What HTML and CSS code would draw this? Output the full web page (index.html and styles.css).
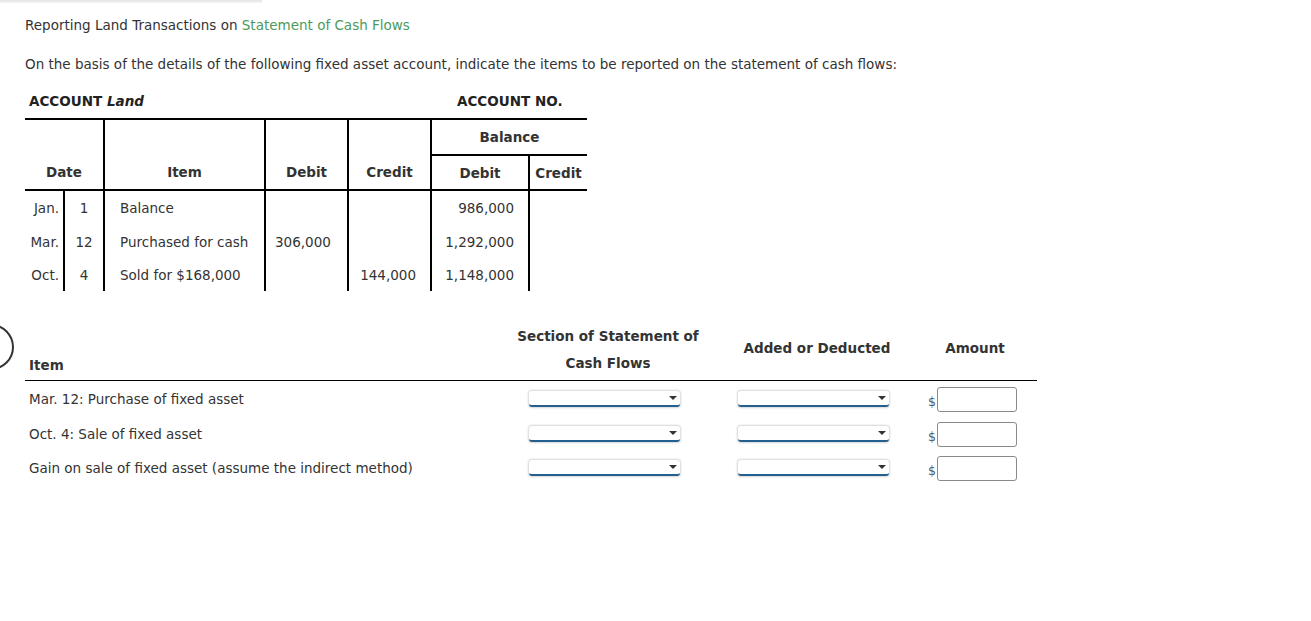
FILE: index.html
```html
<!DOCTYPE html>
<html>
<head>
<meta charset="utf-8">
<link rel="stylesheet" href="styles.css">
</head>
<body>
<div class="topbar"></div>
<div class="ring"></div>
<div class="page">
  <p class="title">Reporting Land Transactions on <span class="green">Statement of Cash Flows</span></p>
  <p class="intro">On the basis of the details of the following fixed asset account, indicate the items to be reported on the statement of cash flows:</p>
  <div class="acct">
    <span class="acct-name">ACCOUNT <i>Land</i></span>
    <span class="acct-no">ACCOUNT NO.</span>
  </div>
  <table class="ledger">
    <colgroup>
      <col style="width:39px"><col style="width:40px"><col style="width:161px"><col style="width:83px"><col style="width:83px"><col style="width:98px"><col style="width:58px">
    </colgroup>
    <tr class="h1">
      <th colspan="2" rowspan="2" class="date-h">Date</th>
      <th rowspan="2" class="vl">Item</th>
      <th rowspan="2" class="vl">Debit</th>
      <th rowspan="2" class="vl">Credit</th>
      <th colspan="2" class="vl bal">Balance</th>
    </tr>
    <tr class="h2">
      <th class="vl bt">Debit</th>
      <th class="vl bt">Credit</th>
    </tr>
    <tr class="r first">
      <td class="mon">Jan.</td><td class="day vl">1</td><td class="vl item">Balance</td><td class="vl num"></td><td class="vl num"></td><td class="vl num">986,000</td><td class="vl"></td>
    </tr>
    <tr class="r">
      <td class="mon">Mar.</td><td class="day vl">12</td><td class="vl item">Purchased for cash</td><td class="vl numl">306,000</td><td class="vl num"></td><td class="vl num">1,292,000</td><td class="vl"></td>
    </tr>
    <tr class="r">
      <td class="mon">Oct.</td><td class="day vl">4</td><td class="vl item">Sold for $168,000</td><td class="vl num"></td><td class="vl num">144,000</td><td class="vl num">1,148,000</td><td class="vl"></td>
    </tr>
  </table>

  <table class="answers">
    <colgroup>
      <col style="width:492px"><col style="width:182px"><col style="width:226px"><col style="width:112px">
    </colgroup>
    <tr class="ah">
      <th class="a-item">Item</th>
      <th class="a-sec">Section of Statement of<br>Cash Flows</th>
      <th class="a-mid add-h">Added or Deducted</th>
      <th class="a-mid amt-h">Amount</th>
    </tr>
    <tr class="ar">
      <td>Mar. 12: Purchase of fixed asset</td>
      <td class="c1"><span class="sel"></span></td>
      <td class="c2"><span class="sel"></span></td>
      <td class="c3"><div class="amt"><span class="dollar">$</span><span class="inp"></span></div></td>
    </tr>
    <tr class="ar">
      <td>Oct. 4: Sale of fixed asset</td>
      <td class="c1"><span class="sel"></span></td>
      <td class="c2"><span class="sel"></span></td>
      <td class="c3"><div class="amt"><span class="dollar">$</span><span class="inp"></span></div></td>
    </tr>
    <tr class="ar">
      <td>Gain on sale of fixed asset (assume the indirect method)</td>
      <td class="c1"><span class="sel"></span></td>
      <td class="c2"><span class="sel"></span></td>
      <td class="c3"><div class="amt"><span class="dollar">$</span><span class="inp"></span></div></td>
    </tr>
  </table>
</div>
</body>
</html>
```

FILE: styles.css
```css
html, body {
  margin: 0;
  padding: 0;
  background: #fff;
}
body {
  font-family: "DejaVu Sans", Verdana, sans-serif;
  font-size: 13.5px;
  color: #333;
  position: relative;
  min-height: 621px;
}
.topbar {
  position: absolute;
  left: 0;
  top: 0;
  width: 262px;
  height: 3px;
  background: linear-gradient(#e4e4e4, #f6f6f6);
}
.ring {
  position: absolute;
  left: -32px;
  top: 324px;
  width: 42px;
  height: 42px;
  border: 2.5px solid #333;
  border-radius: 50%;
}
.page {
  padding: 17px 25px 0 25px;
}
.title {
  margin: 0;
  line-height: 17px;
}
.green {
  color: #4c9a5a;
}
.intro {
  margin: 22px 0 0 0;
  line-height: 17px;
}
.acct {
  display: flex;
  width: 562px;
  margin-top: 20px;
  font-weight: bold;
  line-height: 17px;
  color: #222;
}
.acct-name {
  padding-left: 4px;
  width: 428px;
}
.acct i {
  font-style: italic;
}
.ledger {
  border-collapse: collapse;
  table-layout: fixed;
  width: 562px;
  margin-top: 8px;
  border-top: 2px solid #000;
}
.ledger th {
  font-weight: bold;
  color: #333;
  padding: 0;
}
.ledger .h1 th { height: 34px; }
.ledger .h1 .bal { vertical-align: middle; }
.ledger .h1 th[rowspan] { vertical-align: bottom; padding-bottom: 9px; }
.ledger .h2 th { height: 33px; }
.ledger .bt { border-top: 2px solid #000; }
.ledger .h2 th, .ledger .h1 th[rowspan] { border-bottom: 2px solid #000; }
.vl { border-left: 2px solid #000; }
.ledger td {
  padding: 0;
  height: 33px;
  vertical-align: middle;
}
.ledger .first td { height: 34px; }
.mon { text-align: right; padding-right: 4px !important; }
.day { text-align: center; }
.item { padding-left: 15px !important; }
.num { text-align: right; padding-right: 14px !important; }
.numl { padding-left: 9px !important; }

.answers {
  border-collapse: collapse;
  table-layout: fixed;
  width: 1012px;
  margin-top: 32px;
}
.answers th {
  font-weight: bold;
  color: #333;
  padding: 0;
  line-height: 27px;
  border-bottom: 1.5px solid #000;
}
.a-item {
  text-align: left;
  vertical-align: bottom;
  padding-left: 4px !important;
  padding-bottom: 1px !important;
}
.a-sec { text-align: center; padding-bottom: 3px !important; }
.a-mid { text-align: center; vertical-align: middle; padding-bottom: 6px !important; }
.add-h { padding-left: 10px !important; }
.amt-h { padding-right: 12px !important; }
.ar td {
  height: 34px;
  padding: 0;
  vertical-align: middle;
}
.ar td:first-child { padding-left: 4px; }
.ar:nth-child(2) td { height: 36px; }
.c1 { padding-left: 12px !important; }
.c2 { padding-left: 39px !important; }
.c3 { padding-right: 20px !important; }
.amt {
  display: flex;
  align-items: center;
  justify-content: flex-end;
}
.sel {
  display: block;
  position: relative;
  width: 151px;
  height: 14px;
  border-radius: 3px;
  box-shadow: 0 0 2px 1px #d6d6d6;
  border-bottom: 2px solid #23608f;
  background: #fff;
}
.sel::after {
  content: "";
  position: absolute;
  right: 3px;
  top: 5px;
  border-left: 4px solid transparent;
  border-right: 4px solid transparent;
  border-top: 4px solid #333;
}
.dollar {
  font-size: 12.5px;
  color: #4d5a66;
  margin-right: 1px;
  padding-top: 4px;
}
.inp {
  display: block;
  flex-shrink: 0;
  width: 78px;
  height: 23px;
  border: 1px solid #8a8a8a;
  border-radius: 3px;
  background: #fff;
}
```
